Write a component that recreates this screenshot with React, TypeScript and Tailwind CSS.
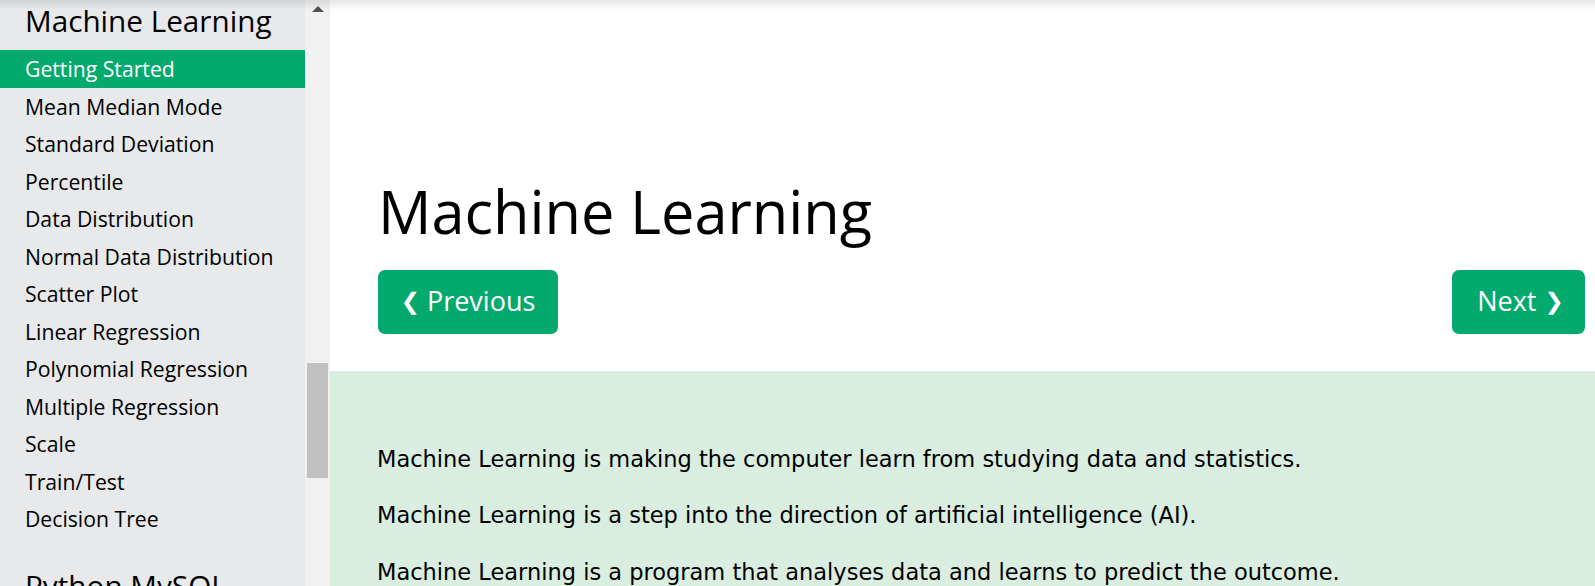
import React from "react";

const topics = [
  "Getting Started",
  "Mean Median Mode",
  "Standard Deviation",
  "Percentile",
  "Data Distribution",
  "Normal Data Distribution",
  "Scatter Plot",
  "Linear Regression",
  "Polynomial Regression",
  "Multiple Regression",
  "Scale",
  "Train/Test",
  "Decision Tree",
];

const ui = { fontFamily: '"Open Sans", "Noto Sans", sans-serif' };
const body = { fontFamily: '"DejaVu Sans", Verdana, sans-serif' };

const Sidebar = () => (
  <div className="h-full w-[305px] shrink-0 overflow-hidden bg-[#e7e9eb] text-black" style={ui}>
    <h2 className="h-[50px] pl-[25px] pt-[2px] text-[29.7px] leading-[37.8px] font-normal">
      Machine Learning
    </h2>
    {topics.map((t, i) => (
      <a
        key={t}
        className={
          "block h-[37.5px] pl-[25px] text-[21.2px] leading-[37.5px] " +
          (i === 0 ? "bg-[#04aa6d] text-white" : "text-black")
        }
      >
        {t}
      </a>
    ))}
    <h2 className="mt-[29px] pl-[25px] text-[29.7px] leading-[37.8px] font-normal">
      Python MySQL
    </h2>
  </div>
);

const Scrollbar = () => (
  <div className="flex h-full w-[25px] shrink-0 flex-col items-center bg-[#f1f1f1]">
    <div className="mt-[6px] h-0 w-0 shrink-0 border-x-[6px] border-b-[6px] border-x-transparent border-b-[#505050]" />
    <div className="mt-[351px] h-[115px] w-[21px] shrink-0 bg-[#c1c1c1]" />
  </div>
);

const NavButton = ({ children, width }: { children: React.ReactNode; width: string }) => (
  <button
    className={`flex h-[64px] ${width} items-center justify-center rounded-[7px] bg-[#04aa6d] text-[27px] text-white`}
    style={ui}
  >
    {children}
  </button>
);

export default function App() {
  return (
    <div className="relative flex h-[586px] w-full overflow-hidden bg-white">
      <Sidebar />
      <Scrollbar />
      <main className="flex min-w-0 flex-1 flex-col">
        <div className="shrink-0 pb-[37px] pl-[48px] pr-[10px] pt-[173px]">
          <h1 className="text-[59.5px] leading-[75.6px] font-normal text-black" style={ui}>
            Machine Learning
          </h1>
          <div className="mt-[21px] flex justify-between">
            <NavButton width="w-[180px]">
              <span className="mr-[7px] text-[23px] font-bold" style={body}>❮</span>Previous
            </NavButton>
            <NavButton width="w-[133px]">
              <span className="ml-[4px]">Next</span>
              <span className="ml-[8px] text-[23px] font-bold" style={body}>❯</span>
            </NavButton>
          </div>
        </div>
        <section className="flex-1 bg-[#d9eee1] pl-[47px] pt-[50px] text-black" style={body}>
          <p className="my-[22.5px] text-[22.5px] leading-[33.75px]">
            Machine Learning is making the computer learn from studying data and statistics.
          </p>
          <p className="my-[22.5px] text-[22.5px] leading-[33.75px]">
            Machine Learning is a step into the direction of artificial intelligence (AI).
          </p>
          <p className="my-[22.5px] text-[22.5px] leading-[33.75px]">
            Machine Learning is a program that analyses data and learns to predict the outcome.
          </p>
        </section>
      </main>
      {/* shadow cast by the fixed top bar above */}
      <div className="pointer-events-none absolute inset-x-0 top-0 h-[10px] bg-linear-to-b from-black/10 to-transparent" />
    </div>
  );
}
